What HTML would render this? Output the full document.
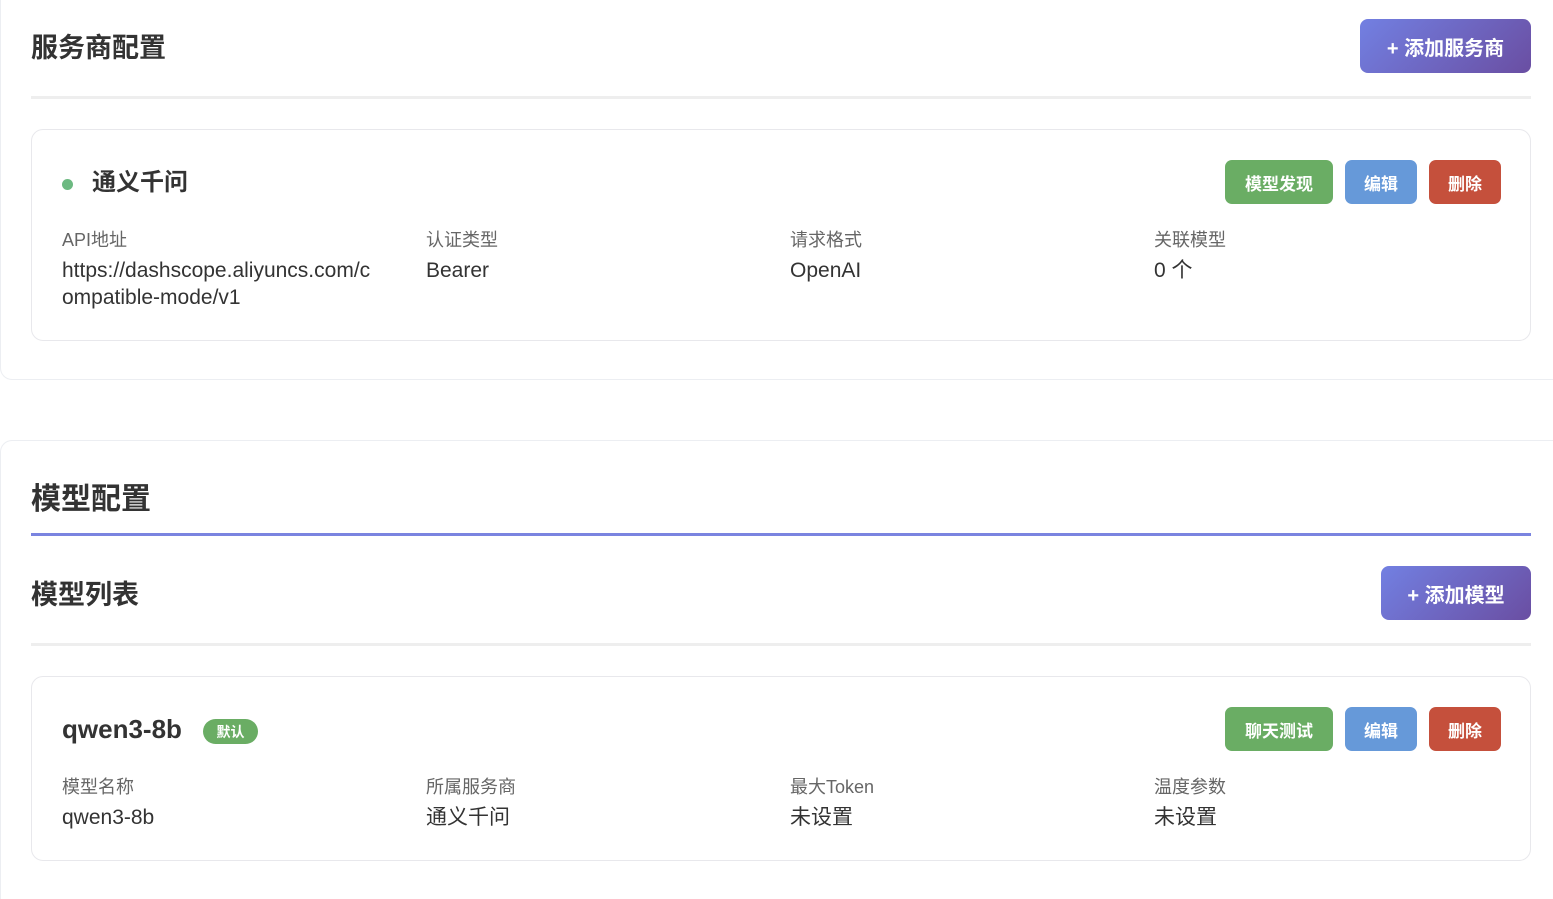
<!DOCTYPE html>
<html><head><meta charset="utf-8"><style>
*{box-sizing:border-box;margin:0;padding:0}
html,body{width:1553px;height:899px;overflow:hidden}
body{background:#fff;font-family:"Liberation Sans","Noto Sans CJK SC",sans-serif;color:#333;position:relative}
.panel{position:absolute;left:0;width:1553px;border:1px solid #eceef2;border-right:none;border-radius:12px 0 0 12px;background:#fff}
.abs{position:absolute}
.h{font-weight:bold;color:#333;white-space:nowrap}
.add{position:absolute;color:#fff;font-weight:bold;font-size:20px;border-radius:8px;background:linear-gradient(135deg,#7280e2,#6a4ea2);display:flex;align-items:center;justify-content:center}
.div{position:absolute;left:31px;width:1500px;height:3px;background:#eeeeee}
.card{position:absolute;left:31px;width:1500px;border:1px solid #e8e8ec;border-radius:12px;background:#fff}
.btn{position:absolute;height:44px;border-radius:7px;color:#fff;font-weight:bold;font-size:17px;display:flex;align-items:center;justify-content:center}
.g{background:#6aad64}.b{background:#6699d9}.r{background:#c5503c}
.lab{position:absolute;font-size:18px;color:#666;white-space:nowrap}
.val{position:absolute;font-size:21px;color:#333;line-height:27px;white-space:nowrap}
</style></head><body>
<div class="panel" style="top:0;height:380px;border-top:none;border-radius:0 0 0 12px"></div>
<div class="panel" style="top:440px;height:459px;border-bottom:none;border-radius:12px 0 0 0"></div>

<div class="abs h" style="left:31px;top:30px;font-size:27px;line-height:36px">服务商配置</div>
<div class="add" style="left:1360px;top:19px;width:171px;height:54px">+ 添加服务商</div>
<div class="div" style="top:96px"></div>
<div class="card" style="top:129px;height:212px"></div>
<div class="abs" style="left:62px;top:179px;width:11px;height:11px;border-radius:50%;background:#6cb981"></div>
<div class="abs h" style="left:92px;top:167px;font-size:24px;line-height:32px">通义千问</div>
<div class="btn g" style="left:1225px;top:160px;width:108px">模型发现</div>
<div class="btn b" style="left:1345px;top:160px;width:72px">编辑</div>
<div class="btn r" style="left:1429px;top:160px;width:72px">删除</div>
<div class="lab" style="left:62px;top:226px">API地址</div>
<div class="lab" style="left:426px;top:226px">认证类型</div>
<div class="lab" style="left:790px;top:226px">请求格式</div>
<div class="lab" style="left:1154px;top:226px">关联模型</div>
<div class="val" style="left:62px;top:257px">https://dashscope.aliyuncs.com/c<br>ompatible-mode/v1</div>
<div class="val" style="left:426px;top:257px">Bearer</div>
<div class="val" style="left:790px;top:257px">OpenAI</div>
<div class="val" style="left:1154px;top:257px">0 个</div>

<div class="abs h" style="left:31px;top:481px;font-size:30px;line-height:38px">模型配置</div>
<div class="abs" style="left:31px;top:533px;width:1500px;height:3px;background:#7a84e0"></div>
<div class="abs h" style="left:31px;top:577px;font-size:27px;line-height:36px">模型列表</div>
<div class="add" style="left:1381px;top:566px;width:150px;height:54px">+ 添加模型</div>
<div class="div" style="top:643px"></div>
<div class="card" style="top:676px;height:185px"></div>
<div class="abs h" style="left:62px;top:713px;font-size:26px;line-height:32px">qwen3-8b</div>
<div class="abs" style="left:203px;top:719px;width:55px;height:25px;border-radius:13px;background:#6aad64;color:#fff;font-size:14px;font-weight:bold;display:flex;align-items:center;justify-content:center">默认</div>
<div class="btn g" style="left:1225px;top:707px;width:108px">聊天测试</div>
<div class="btn b" style="left:1345px;top:707px;width:72px">编辑</div>
<div class="btn r" style="left:1429px;top:707px;width:72px">删除</div>
<div class="lab" style="left:62px;top:773px">模型名称</div>
<div class="lab" style="left:426px;top:773px">所属服务商</div>
<div class="lab" style="left:790px;top:773px">最大Token</div>
<div class="lab" style="left:1154px;top:773px">温度参数</div>
<div class="val" style="left:62px;top:804px">qwen3-8b</div>
<div class="val" style="left:426px;top:804px">通义千问</div>
<div class="val" style="left:790px;top:804px">未设置</div>
<div class="val" style="left:1154px;top:804px">未设置</div>
</body></html>
